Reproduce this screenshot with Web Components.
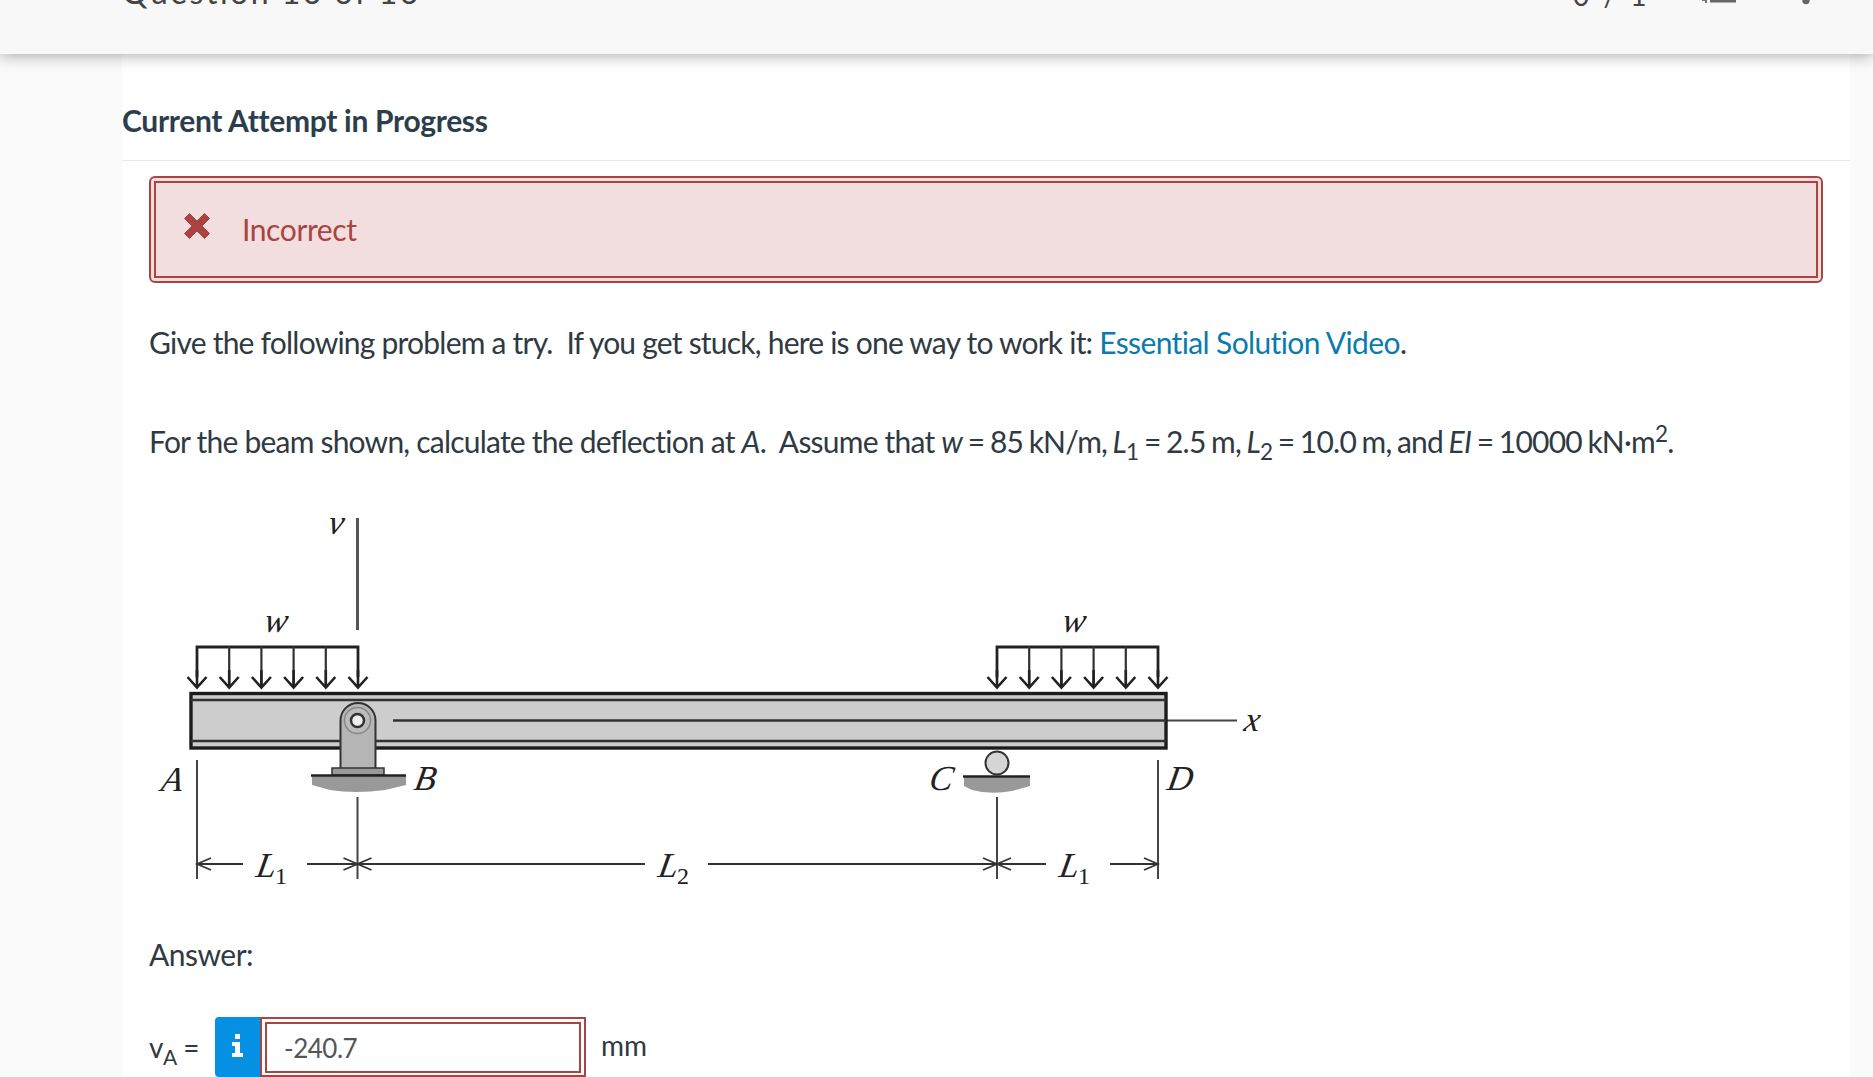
<!DOCTYPE html>
<html>
<head>
<meta charset="utf-8">
<title>Question 16 of 16</title>
<style>
  html, body { margin: 0; height: 100%; overflow: hidden; }
  body { background: #fafafa; font-family: Lato, "Liberation Sans", sans-serif; color: #2f3a42; }
  sub, sup { font-size: .75em; line-height: 0; }
  a { color: #0b7bad; text-decoration: none; letter-spacing: -0.62px; }
  .math { word-spacing: -1.4px; }
</style>
</head>
<body>
<quiz-header></quiz-header>
<quiz-panel>
  <panel-heading>Current Attempt in Progress</panel-heading>
  <result-alert>Incorrect</result-alert>
  <prob-text gap="39">Give the following problem a try.&nbsp; If you get stuck, here is one way to work it: <a href="#">Essential Solution Video</a>.</prob-text>
  <prob-text gap="59">For the beam shown, calculate the deflection at <i>A</i>.&nbsp; Assume that <span class="math"><i>w</i> = 85 kN/m, <i>L</i><sub>1</sub> = 2.5 m, <i>L</i><sub>2</sub> = 10.0 m, and <i>EI</i> = 10000 kN·m<sup>2</sup>.</span></prob-text>
  <beam-figure></beam-figure>
  <answer-row></answer-row>
</quiz-panel>
<script>
(function () {
  class QuizHeader extends HTMLElement {
    constructor() {
      super();
      const shadow = this.attachShadow({ mode: "open" });
      shadow.innerHTML = `
        <style>
          :host {
            display: flex;
            position: relative;
            z-index: 2;
            height: 54px;
            background: #f8f8f8;
            box-shadow: 0 2px 14px rgba(0, 0, 0, 0.32);
          }
          .clip {
            flex: 1;
            height: 54px;
            overflow: hidden;
            display: flex;
            justify-content: space-between;
            align-items: flex-start;
            padding: 0 63px 0 122px;
          }
          .title {
            font-size: 32px;
            letter-spacing: 2.5px;
            line-height: 32px;
            margin-top: -24px;
            color: #444;
            white-space: nowrap;
          }
          .right {
            display: flex;
            align-items: flex-start;
            gap: 62px;
          }
          .score {
            font-size: 28px;
            letter-spacing: 1.500px;
            word-spacing: 4px;
            line-height: 28px;
            margin-top: -19px;
            margin-right: -8px;
            color: #444;
            white-space: nowrap;
          }
          .list { margin-right: 4px; }
          svg { display: block; }
        </style>
        <div class="clip">
          <div class="title">Question 16 of 16</div>
          <div class="right">
            <div class="score">0 / 1</div>
            <svg class="list" width="34" height="6" viewBox="0 0 34 6"><rect x="8" y="0" width="26" height="2.500" fill="#666"/><rect x="0" y="0" width="5" height="1" fill="#777"/><rect x="3" y="1" width="2" height="2" fill="#777"/></svg>
            <svg width="8" height="5" viewBox="0 0 8 5"><circle cx="4" cy="0.500" r="3.700" fill="#666"/></svg>
          </div>
        </div>`;
    }
  }

  class QuizPanel extends HTMLElement {
    constructor() {
      super();
      const shadow = this.attachShadow({ mode: "open" });
      shadow.innerHTML = `
        <style>
          :host {
            display: block;
            height: 1023px;
            margin: 0 23px 0 122px;
            background: #fff;
            overflow: hidden;
          }
        </style>
        <slot></slot>`;
    }
  }

  class PanelHeading extends HTMLElement {
    constructor() {
      super();
      const shadow = this.attachShadow({ mode: "open" });
      shadow.innerHTML = `
        <style>
          :host {
            display: block;
            height: 107px;
            box-sizing: border-box;
            padding-top: 48px;
            font-size: 30px;
            line-height: 36px;
            font-weight: 700;
            letter-spacing: -0.32px;
            color: #2c3e4c;
            border-bottom: 1px solid #eaeaea;
          }
        </style>
        <slot></slot>`;
    }
  }

  class ResultAlert extends HTMLElement {
    constructor() {
      super();
      const shadow = this.attachShadow({ mode: "open" });
      shadow.innerHTML = `
        <style>
          :host {
            display: flex;
            align-items: center;
            gap: 32px;
            height: 107px;
            box-sizing: border-box;
            margin: 15px 27px 0 27px;
            padding: 0 0 0 33px;
            background: #f2dede;
            border: 2px solid #a94442;
            border-radius: 6px;
            position: relative;
            font-size: 30px;
            letter-spacing: -0.4px;
            color: #a94442;
          }
          /* second ring of the double border */
          :host::after {
            content: "";
            position: absolute;
            inset: 3px;
            border: 2px solid #a94442;
          }
          svg { margin-top: -8px; }
          span { margin-top: -2px; }
        </style>
        <svg width="26" height="26" viewBox="0 0 26 26"><path d="M5.500 0.500 13 8 20.500 0.500 25.500 5.500 18 13 25.500 20.500 20.500 25.500 13 18 5.500 25.500 0.500 20.500 8 13 0.500 5.500Z" fill="#a94442" stroke="#a94442" stroke-linejoin="round"/></svg>
        <span><slot></slot></span>`;
    }
  }

  class ProbText extends HTMLElement {
    constructor() {
      super();
      const shadow = this.attachShadow({ mode: "open" });
      shadow.innerHTML = `
        <style>
          :host {
            display: block;
            margin: ${this.getAttribute("gap")}px 0 0 27px;
            font-size: 30px;
            line-height: 40px;
            letter-spacing: -0.78px;
            white-space: nowrap;
            color: #2f3a42;
          }
        </style>
        <slot></slot>`;
    }
  }

  class BeamFigure extends HTMLElement {
    constructor() {
      super();
      const shadow = this.attachShadow({ mode: "open" });
      // viewBox is the screenshot's own coordinates, so numbers read like the reference
      const arrows = (x0) => {
        let out = `<path d="M${x0} 677V647H${x0 + 161}V677" fill="none" stroke="#222" stroke-width="2.800"/>`;
        for (let i = 0; i < 6; i++) {
          const x = x0 + i * 32.2;
          if (i > 0 && i < 5) out += `<path d="M${x} 647V686" stroke="#333" stroke-width="2.200"/>`;
          out += `<path d="M${x - 9.500} 677 ${x} 687.500 ${x + 9.500} 677M${x} 670V686" fill="none" stroke="#222" stroke-width="2.600"/>`;
        }
        return out;
      };
      const head = (x, y, d) =>
        `<path d="M${x + d * 14} ${y - 6} ${x} ${y} ${x + d * 14} ${y + 6}" fill="none" stroke="#333" stroke-width="1.700"/>`;
      shadow.innerHTML = `
        <style>
          :host { display: block; margin: 39px 0 0; height: 380px; }
          svg { display: block; overflow: visible; }
          text { font-family: "Liberation Serif", serif; font-style: italic; fill: #222; font-size: 35px; transform-box: fill-box; transform-origin: center; transform: skewX(-10deg); }
          text.sub { font-style: normal; font-size: 24px; transform: none; }
        </style>
        <svg width="1728" height="380" viewBox="122 500 1728 380">
          <defs><filter id="soft" x="0" y="0" width="100%" height="100%"><feGaussianBlur stdDeviation="0.500"/></filter></defs>
          <g filter="url(#soft)">
          <path d="M357.500 518V630" stroke="#555" stroke-width="3"/>
          <path d="M1166 720.500H1237" stroke="#444" stroke-width="2"/>
          ${arrows(197)}
          ${arrows(997)}
          <!-- beam -->
          <rect x="191" y="693.500" width="975" height="54.500" fill="#cdcdcd" stroke="#1f1f1f" stroke-width="3.400"/>
          <path d="M191 700H1166M191 741H1166" stroke="#333" stroke-width="2.600"/>
          <path d="M393 720.500H1166" stroke="#333" stroke-width="2.600"/>
          <!-- pin support B -->
          <path d="M340.500 769V720.500a17.500 17.500 0 0 1 35 0V769Z" fill="#b5b5b5" stroke="#333" stroke-width="2"/>
          <circle cx="357.500" cy="720.500" r="13" fill="#bbb" stroke="#888" stroke-width="1.500"/>
          <circle cx="357.500" cy="720.500" r="6.500" fill="#eee" stroke="#333" stroke-width="2.500"/>
          <rect x="332" y="768" width="52" height="7" fill="#999" stroke="#333" stroke-width="1.500"/>
          <path d="M312 776H406V785L385 790Q355 794 330 790L312 785Z" fill="#999"/>
          <path d="M311 775.500H406" stroke="#222" stroke-width="2.600"/>
          <!-- roller support C -->
          <circle cx="997" cy="763" r="11.500" fill="#d5d5d5" stroke="#333" stroke-width="2"/>
          <path d="M964 777H1030V786L1012 791Q990 795 972 790L964 786Z" fill="#999"/>
          <path d="M963 776.500H1030" stroke="#222" stroke-width="2.600"/>
          <!-- dimension lines -->
          <path d="M197 760V879M357.500 797V879M997 797V879M1158 760V879" stroke="#444" stroke-width="2"/>
          <path d="M197 864H243M307 864H357.500M357.500 864H645M708 864H997M997 864H1046M1110 864H1158" stroke="#333" stroke-width="1.900"/>
          ${head(197, 864, 1)}${head(357.500, 864, -1)}${head(357.500, 864, 1)}${head(997, 864, -1)}${head(997, 864, 1)}${head(1158, 864, -1)}
          </g>
          <text x="329" y="534">v</text>
          <text x="265" y="632">w</text>
          <text x="1063" y="632">w</text>
          <text x="1245" y="731">x</text>
          <text x="415" y="790">B</text>
          <text x="930" y="790">C</text>
          <text x="1168" y="790">D</text>
          <text x="162" y="791">A</text>
          <text x="257" y="877">L</text><text class="sub" x="275" y="884">1</text>
          <text x="659" y="877">L</text><text class="sub" x="677" y="884">2</text>
          <text x="1060" y="877">L</text><text class="sub" x="1078" y="884">1</text>
        </svg>`;
    }
  }

  class AnswerRow extends HTMLElement {
    constructor() {
      super();
      const shadow = this.attachShadow({ mode: "open" });
      shadow.innerHTML = `
        <style>
          :host {
            display: block;
            margin: 54px 0 0 27px;
            font-size: 30px;
            line-height: 40px;
            letter-spacing: -0.5px;
            color: #2f3a42;
          }
          .row {
            display: flex;
            align-items: stretch;
            height: 60px;
            margin-top: 43px;
          }
          .label { display: flex; align-items: center; width: 66px; font-size: 28px; }
          sub { font-size: .75em; line-height: 0; }
          .info {
            width: 45px;
            background: #0590e3;
            border-radius: 4px 0 0 4px;
            display: flex;
            justify-content: center;
            align-items: center;
          }
          .info svg { margin-top: -3px; }
          .field {
            width: 326px;
            box-sizing: border-box;
            border: 2px solid #a94442;
            padding: 3px 3px 2px;
            display: flex;
          }
          .field span {
            flex: 1;
            border: 2px solid #a94442;
            padding-left: 17px;
            color: #555;
            font-size: 26px;
            display: flex;
            align-items: center;
          }
          .unit { display: flex; align-items: center; margin-left: 15px; font-size: 28px; letter-spacing: 0; margin-top: -5px; }
        </style>
        <div>Answer:</div>
        <div class="row">
          <div class="label"><span>v<sub>A</sub> =</span></div>
          <div class="info"><svg width="11" height="23" viewBox="0 0 11 23"><path d="M3 0H8V5H3ZM0 8H8V19H11V23H0V19H3V12H0Z" fill="#fff"/></svg></div>
          <div class="field"><span>-240.7</span></div>
          <div class="unit">mm</div>
        </div>`;
    }
  }

  customElements.define("quiz-header", QuizHeader);
  customElements.define("quiz-panel", QuizPanel);
  customElements.define("panel-heading", PanelHeading);
  customElements.define("result-alert", ResultAlert);
  customElements.define("prob-text", ProbText);
  customElements.define("beam-figure", BeamFigure);
  customElements.define("answer-row", AnswerRow);
})();
</script>
</body>
</html>
